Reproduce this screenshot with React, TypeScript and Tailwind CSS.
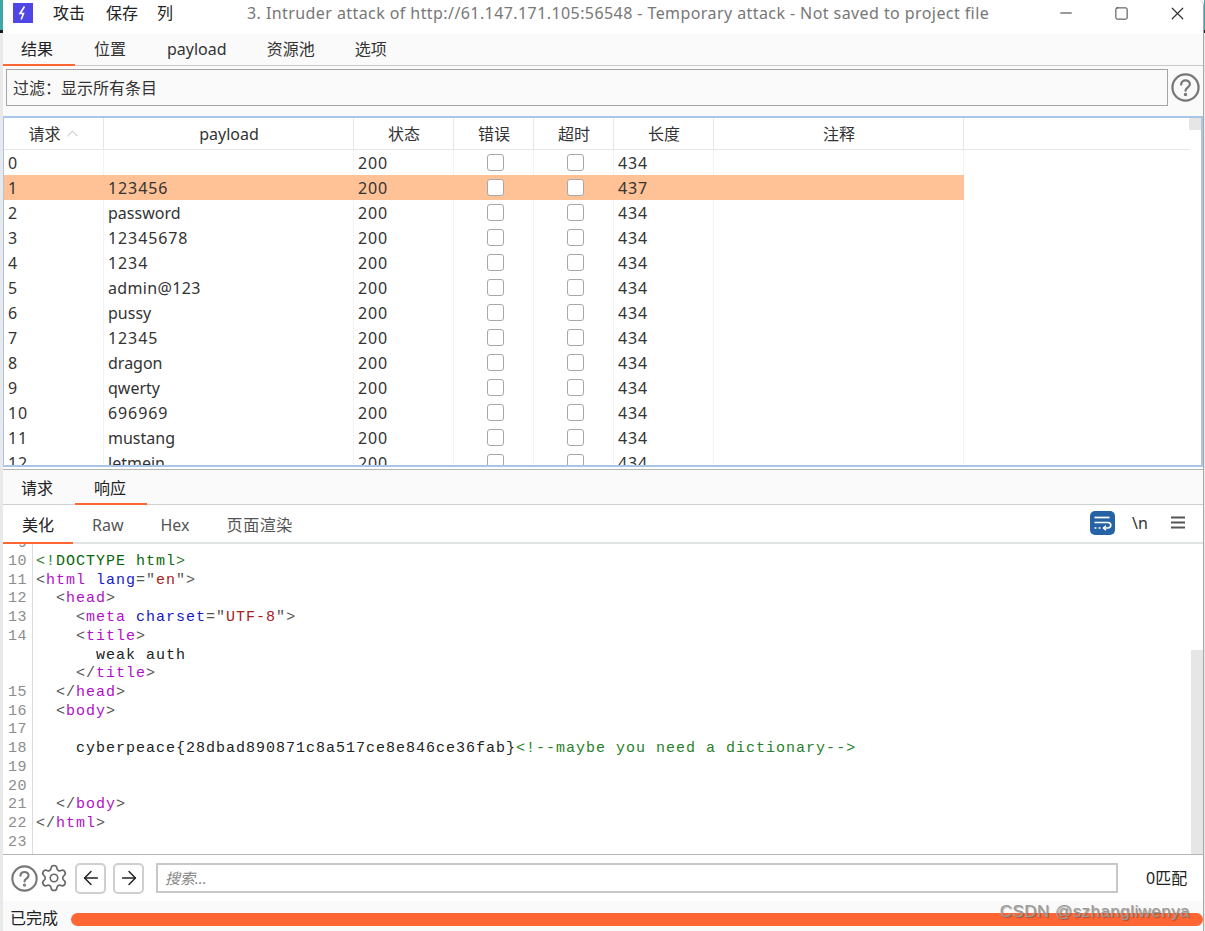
import React from "react";
import { ArrowLeft, ArrowRight, Settings, Minus, Square, X, ChevronUp } from "lucide-react";

const rows: [string, string, string][] = [
  ["0", "", "434"], ["1", "123456", "437"], ["2", "password", "434"], ["3", "12345678", "434"],
  ["4", "1234", "434"], ["5", "admin@123", "434"], ["6", "pussy", "434"], ["7", "12345", "434"],
  ["8", "dragon", "434"], ["9", "qwerty", "434"], ["10", "696969", "434"], ["11", "mustang", "434"],
  ["12", "letmein", "434"],
];

const Num = ({ children }: { children: React.ReactNode }) => <span className="tracking-[0.9px]">{children}</span>;

const Help = ({ size }: { size: number }) => (
  <svg width={size} height={size} viewBox="0 0 28 28" fill="none" stroke="#777" strokeWidth="2.2" strokeLinecap="round" className="shrink-0">
    <circle cx="14" cy="14" r="12.6" />
    <path d="M9.8 11.2c0-2.6 2-4 4.2-4s4.2 1.4 4.2 3.7c0 3.2-4.2 3.2-4.2 6.2" />
    <circle cx="14" cy="20.8" r="0.6" fill="#777" />
  </svg>
);

const Tag = ({ c, children }: { c: string; children: React.ReactNode }) => <span style={{ color: c }}>{children}</span>;
const G = "#555555", M = "#b010c8", B = "#1818c8", R = "#a82020", D = "#0a660a", C = "#2a802a", K = "#222222";

const T = ({ close, n }: { close?: boolean; n: string }) => (
  <>
    <Tag c={G}>{close ? "</" : "<"}</Tag><Tag c={M}>{n}</Tag><Tag c={G}>{">"}</Tag>
  </>
);

const code: [string, React.ReactNode][] = [
  ["10", <><Tag c={C}>{"<!"}</Tag><Tag c={D}>DOCTYPE html</Tag><Tag c={C}>{">"}</Tag></>],
  ["11", <><Tag c={G}>{"<"}</Tag><Tag c={M}>html</Tag> <Tag c={B}>lang</Tag><Tag c={G}>="</Tag><Tag c={R}>en</Tag><Tag c={G}>"{">"}</Tag></>],
  ["12", <>  <T n="head" /></>],
  ["13", <>    <Tag c={G}>{"<"}</Tag><Tag c={M}>meta</Tag> <Tag c={B}>charset</Tag><Tag c={G}>="</Tag><Tag c={R}>UTF-8</Tag><Tag c={G}>"{">"}</Tag></>],
  ["14", <>    <T n="title" /></>],
  ["", <Tag c={K}>{"      weak auth"}</Tag>],
  ["", <>    <T close n="title" /></>],
  ["15", <>  <T close n="head" /></>],
  ["16", <>  <T n="body" /></>],
  ["17", ""],
  ["18", <><Tag c={K}>{"    cyberpeace{28dbad890871c8a517ce8e846ce36fab}"}</Tag><Tag c={C}>{"<!--maybe you need a dictionary-->"}</Tag></>],
  ["19", ""],
  ["20", ""],
  ["21", <>  <T close n="body" /></>],
  ["22", <T close n="html" />],
  ["23", ""],
];

const cols = ["w-[100px]", "w-[250px]", "w-[100px]", "w-[80px]", "w-[80px]", "w-[100px]", "w-[250px]"];

const Check = () => (
  <div className="w-[17px] h-[17px] rounded-[3px] border border-[#a8a8a8] bg-white" />
);

const Strip = ({ w }: { w: string }) => (
  <div className={`${w} shrink-0 flex flex-col`}>
    <div className="h-[30px] bg-[#3fa7a4]" />
    <div className="h-[3px] bg-[#1a1a1a]" />
    <div className="flex-1 bg-[#e9e9e9]" />
  </div>
);

export default function App() {
  return (
    <div
      className="w-[1205px] h-[931px] overflow-hidden flex bg-white text-[16px] text-[#333]"
      style={{ fontFamily: '"Noto Sans", "Noto Sans CJK SC", sans-serif' }}
    >
      <Strip w="w-[3px]" />
      <div className="relative flex-1 min-w-0 flex flex-col bg-white border-r border-[#a8a8a8] rounded-tr-[6px] rounded-tl-[6px] overflow-hidden">
        {/* title bar */}
        <div className="h-[34px] shrink-0 flex items-center bg-white pb-[8px]">
          <svg width="20" height="20" viewBox="0 0 20 20" className="ml-[10px] shrink-0">
            <rect width="20" height="20" fill="#4f46e5" />
            <path d="M11.5 3.5 7 10.5h3.5L8.2 16.5" fill="none" stroke="#fff" strokeWidth="1.6" />
          </svg>
          <div className="flex ml-[20px] text-[#222]">
            <span>攻击</span><span className="ml-[21px]">保存</span><span className="ml-[19px]">列</span>
          </div>
          <span className="ml-[74px] text-[#777] whitespace-nowrap tracking-[0.42px]">
            3. Intruder attack of http://61.147.171.105:56548 - Temporary attack - Not saved to project file
          </span>
          <div className="ml-auto flex items-center mr-[15px] text-[#333]">
            <Minus size={18} strokeWidth={1.5} className="mr-[39px]" />
            <Square size={15} strokeWidth={1.5} className="mr-[38px]" />
            <X size={21} strokeWidth={1.4} />
          </div>
        </div>
        {/* main tabs */}
        <div className="h-[32px] shrink-0 flex items-stretch bg-[#fafafa] border-b border-[#c9c9c9]">
          <div className="w-[72px] pl-[18px] border-b-[2px] border-[#ff6633] -mb-px pt-[3px] text-[#222]">结果</div>
          <div className="pl-[19px] pt-[3px]">位置</div>
          <div className="pl-[41px] pt-[3px]">payload</div>
          <div className="pl-[40px] pt-[3px]">资源池</div>
          <div className="pl-[40px] pt-[3px]">选项</div>
        </div>
        {/* filter */}
        <div className="h-[50px] shrink-0 bg-[#fafafa] flex items-start pt-[3px] pl-[3px] pr-[2px]">
          <div className="flex-1 h-[37px] border border-[#a5a5a5] flex items-center pl-[6px] text-[#333]">过滤：显示所有条目</div>
          <div className="ml-[3px] mr-[1px] mt-[4px]"><Help size={29} /></div>
        </div>
        {/* results table */}
        <div className="h-[351px] shrink-0 border-y-[2px] border-x-[2px] border-[#aac6e6] border-l-[1px] flex overflow-hidden bg-white">
          <div className="flex-1 min-w-0">
            <div className="flex h-[32px] border-b border-[#e6e6e6]">
              {["请求", "payload", "状态", "错误", "超时", "长度", "注释"].map((h, i) => (
                <div key={h} className={`${cols[i]} shrink-0 border-r border-[#e6e6e6] flex items-center justify-center ${i === 0 ? "pl-[3px]" : "pl-[1px]"}`}>
                  {h}
                  {i === 0 && <ChevronUp size={19} strokeWidth={1.1} className="ml-[2px] text-[#aaa]" />}
                </div>
              ))}
            </div>
            {rows.map(([a, b, c]) => {
              const sep = a === "1" ? "border-transparent" : "border-[#f3f3f3]";
              return (
                <div key={a} className={`flex h-[25px] w-[960px] ${a === "1" ? "bg-[#ffc296]" : ""}`}>
                  <div className={`${cols[0]} shrink-0 pl-[4px] border-r ${sep} leading-[27px]`}><Num>{a}</Num></div>
                  <div className={`${cols[1]} shrink-0 pl-[4px] border-r ${sep} leading-[27px] ${b === "admin@123" ? "tracking-[0.35px]" : ""}`}>
                    {/^\d+$/.test(b) ? <Num>{b}</Num> : b}
                  </div>
                  <div className={`${cols[2]} shrink-0 pl-[4px] border-r ${sep} leading-[27px]`}><Num>200</Num></div>
                  <div className={`${cols[3]} shrink-0 border-r ${sep} flex items-center justify-center pl-[4px]`}><Check /></div>
                  <div className={`${cols[4]} shrink-0 border-r ${sep} flex items-center justify-center pl-[4px]`}><Check /></div>
                  <div className={`${cols[5]} shrink-0 pl-[4px] border-r ${sep} leading-[27px]`}><Num>{c}</Num></div>
                  <div className={`${cols[6]} shrink-0 border-r ${sep}`} />
                </div>
              );
            })}
          </div>
          <div className="w-[12px] shrink-0 bg-white">
            <div className="h-[12px] bg-[#e6e6e6]" />
          </div>
        </div>
        <div className="h-[3px] shrink-0 bg-white border-b border-[#b9b3b3]" />
        {/* response tabs */}
        <div className="h-[35px] shrink-0 flex bg-[#fafafa] border-b border-[#cfcfcf] text-[#222]">
          <div className="w-[72px] pl-[18px] pt-[6px]">请求</div>
          <div className="w-[72px] pl-[19px] pt-[6px] border-b-[2px] border-[#ff6633] -mb-px">响应</div>
        </div>
        {/* sub tabs */}
        <div className="h-[39px] shrink-0 flex items-stretch bg-white border-b-[2px] border-[#dfe3e3]">
          <div className="w-[70px] pl-[19px] pt-[8px] border-b-[2px] border-[#ff6633] -mb-[2px] text-[#222]">美化</div>
          <div className="pl-[19px] pt-[8px] text-[#555]">Raw</div>
          <div className="pl-[37px] pt-[8px] text-[#555]">Hex</div>
          <div className="pl-[37px] pt-[8px] text-[#555] tracking-[0.6px]">页面渲染</div>
          <div className="ml-auto flex items-center pr-[18px] pb-[2px]">
            <div className="w-[25px] h-[24px] rounded-[5px] bg-[#2563a4] flex items-center justify-center">
              <svg width="19" height="16" viewBox="0 0 19 16" fill="none" stroke="#fff" strokeWidth="1.7">
                <path d="M1.5 2.5h15" />
                <path d="M1.5 7.5h13.5a2.6 2.6 0 0 1 0 5.5H10.5" />
                <path d="M13 10.8l-2.6 2.2 2.6 2.2" strokeWidth="1.4" />
                <path d="M1.5 13h2M5.5 13h2" />
              </svg>
            </div>
            <span className="ml-[17px] w-[16px] text-[#333] leading-none">\n</span>
            <svg width="14" height="13" viewBox="0 0 14 13" className="ml-[23px]" stroke="#555" strokeWidth="2">
              <path d="M0 1.5h14M0 6.5h14M0 11.5h14" />
            </svg>
          </div>
        </div>
        {/* code */}
        <div className="h-[311px] shrink-0 flex overflow-hidden bg-white border-b border-[#b5b5b5]" style={{ fontFamily: '"Liberation Mono", monospace' }}>
          <div className="w-[30px] shrink-0 border-r border-[#dcdcdc]">
            <div className="h-[9px] overflow-hidden text-[15px] leading-[0px] text-[#8d8d8d] pl-[15px]">9</div>
            {code.map(([n], i) => (
              <div key={i} className="h-[18.73px] leading-[18.73px] text-[15px] tracking-[0.4px] text-[#8d8d8d] pl-[5px]">{n}</div>
            ))}
          </div>
          <div className="flex-1 min-w-0 pl-[3px] pt-[9px] whitespace-pre text-[15px] tracking-[1px]">
            {code.map(([, c], i) => (
              <div key={i} className="h-[18.73px] leading-[18.73px]">{c}</div>
            ))}
          </div>
          <div className="w-[12px] shrink-0 flex flex-col justify-end">
            <div className="h-[204px] bg-[#e6e6e6]" />
          </div>
        </div>
        {/* search */}
        <div className="h-[46px] shrink-0 flex items-center bg-white">
          <div className="ml-[8px]"><Help size={27} /></div>
          <Settings size={30} strokeWidth={1.3} className="ml-[1px] text-[#666]" />
          <button className="ml-[6px] w-[31px] h-[31px] rounded-[5px] border-[2px] border-[#cfcfcf] flex items-center justify-center bg-white"><ArrowLeft size={22} strokeWidth={1.6} className="text-[#222]" /></button>
          <button className="ml-[7px] w-[31px] h-[31px] rounded-[5px] border-[2px] border-[#cfcfcf] flex items-center justify-center bg-white"><ArrowRight size={22} strokeWidth={1.6} className="text-[#222]" /></button>
          <div className="ml-[12px] w-[962px] h-[30px] border-[2px] border-[#c8c8c8] flex items-center pl-[7px] italic text-[#888] text-[15px]">搜索...</div>
          <span className="ml-[28px] text-[#222] whitespace-nowrap">0匹配</span>
        </div>
        {/* status */}
        <div className="flex-1 flex items-center bg-[#fafafa] pl-[7px] pt-[4px]">
          <span className="text-[#222] whitespace-nowrap">已完成</span>
          <div className="ml-[13px] flex-1 h-[13px] rounded-full bg-[#ff6633] mt-[2px]" />
        </div>
        <span className="absolute right-[13px] bottom-[7px] text-[17px] tracking-[0.45px] text-[#999] whitespace-nowrap [text-shadow:1px_1px_1px_rgba(60,60,60,0.45)]" style={{ fontFamily: '"Liberation Sans", sans-serif' }}>
          CSDN @szhangliwenya
        </span>
      </div>
      <Strip w="w-[1px]" />
    </div>
  );
}
